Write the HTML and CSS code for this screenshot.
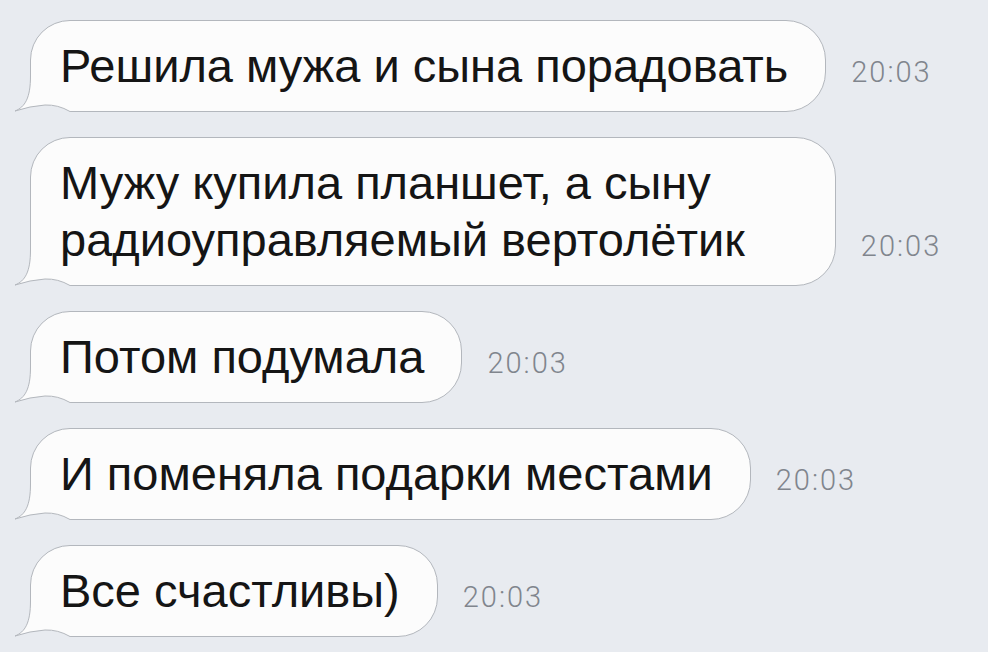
FILE: index.html
```html
<!DOCTYPE html>
<html lang="ru">

<head>
    <meta charset="UTF-8">
    <meta name="viewport" content="width=device-width, initial-scale=1.0">
    <title>Переписка</title>
    <link rel="stylesheet" href="styles.css">
</head>

<body>
    <div class="chat">
        <div class="msg">
            <div class="bubble">
                <svg class="tail" viewBox="0 0 64 48">
                    <path class="tail-gap" d="M1 45 Q16 40 31 39 Q44 38.5 56 45.5 L56 48 L0 48 Z" />
                    <path class="tail-fill" d="M16.5 0 L16.5 10 C16.5 32 11 41 1 45 Q16 40 31 39 Q44 38.5 56 45.5 L58 40 L58 0 Z" />
                    <path class="tail-line" d="M16.5 0 L16.5 10 C16.5 32 11 41 1 45 Q16 40 31 39 Q44 38.5 56 45.5" />
                </svg>
                <p class="text">Решила мужа и сына порадовать</p>
            </div>
            <span class="time">20:03</span>
        </div>

        <div class="msg">
            <div class="bubble bubble-wide">
                <svg class="tail" viewBox="0 0 64 48">
                    <path class="tail-gap" d="M1 45 Q16 40 31 39 Q44 38.5 56 45.5 L56 48 L0 48 Z" />
                    <path class="tail-fill" d="M16.5 0 L16.5 10 C16.5 32 11 41 1 45 Q16 40 31 39 Q44 38.5 56 45.5 L58 40 L58 0 Z" />
                    <path class="tail-line" d="M16.5 0 L16.5 10 C16.5 32 11 41 1 45 Q16 40 31 39 Q44 38.5 56 45.5" />
                </svg>
                <p class="text">Мужу купила планшет, а сыну<br>радиоуправляемый вертолётик</p>
            </div>
            <span class="time">20:03</span>
        </div>

        <div class="msg">
            <div class="bubble">
                <svg class="tail" viewBox="0 0 64 48">
                    <path class="tail-gap" d="M1 45 Q16 40 31 39 Q44 38.5 56 45.5 L56 48 L0 48 Z" />
                    <path class="tail-fill" d="M16.5 0 L16.5 10 C16.5 32 11 41 1 45 Q16 40 31 39 Q44 38.5 56 45.5 L58 40 L58 0 Z" />
                    <path class="tail-line" d="M16.5 0 L16.5 10 C16.5 32 11 41 1 45 Q16 40 31 39 Q44 38.5 56 45.5" />
                </svg>
                <p class="text">Потом подумала</p>
            </div>
            <span class="time">20:03</span>
        </div>

        <div class="msg">
            <div class="bubble">
                <svg class="tail" viewBox="0 0 64 48">
                    <path class="tail-gap" d="M1 45 Q16 40 31 39 Q44 38.5 56 45.5 L56 48 L0 48 Z" />
                    <path class="tail-fill" d="M16.5 0 L16.5 10 C16.5 32 11 41 1 45 Q16 40 31 39 Q44 38.5 56 45.5 L58 40 L58 0 Z" />
                    <path class="tail-line" d="M16.5 0 L16.5 10 C16.5 32 11 41 1 45 Q16 40 31 39 Q44 38.5 56 45.5" />
                </svg>
                <p class="text">И поменяла подарки местами</p>
            </div>
            <span class="time">20:03</span>
        </div>

        <div class="msg">
            <div class="bubble">
                <svg class="tail" viewBox="0 0 64 48">
                    <path class="tail-gap" d="M1 45 Q16 40 31 39 Q44 38.5 56 45.5 L56 48 L0 48 Z" />
                    <path class="tail-fill" d="M16.5 0 L16.5 10 C16.5 32 11 41 1 45 Q16 40 31 39 Q44 38.5 56 45.5 L58 40 L58 0 Z" />
                    <path class="tail-line" d="M16.5 0 L16.5 10 C16.5 32 11 41 1 45 Q16 40 31 39 Q44 38.5 56 45.5" />
                </svg>
                <p class="text">Все счастливы)</p>
            </div>
            <span class="time">20:03</span>
        </div>
    </div>
</body>

</html>
```

FILE: styles.css
```css
* {
    margin: 0;
    padding: 0;
    box-sizing: border-box;
}

body {
    font-family: "Liberation Sans", Arial, sans-serif;
    background-color: #e8ebf0;
}

.chat {
    display: flex;
    flex-direction: column;
    gap: 25px;
    padding: 20px 0 0 30px;
}

.msg {
    display: flex;
    align-items: flex-end;
}

.bubble {
    position: relative;
    background-color: #fcfcfc;
    border: 1px solid #b3b7bd;
    border-radius: 40px;
    padding: 16px 37px 17px 29px;
}

/* second message has extra room on the right */
.bubble-wide {
    padding-right: 90px;
}

.text {
    position: relative;
    font-size: 47px;
    line-height: 57px;
    color: #151515;
    white-space: nowrap;
}

.tail {
    position: absolute;
    left: -17px;
    bottom: -3px;
    width: 64px;
    height: 48px;
}

.tail-gap {
    fill: #e8ebf0;
}

.tail-fill {
    fill: #fcfcfc;
}

.tail-line {
    fill: none;
    stroke: #b3b7bd;
    stroke-width: 1;
}

.time {
    font-family: Roboto, "Liberation Sans", sans-serif;
    font-weight: 300;
    font-size: 29px;
    letter-spacing: 2px;
    line-height: 30px;
    color: #80858d;
    margin: 0 0 25px 25px;
}
```
